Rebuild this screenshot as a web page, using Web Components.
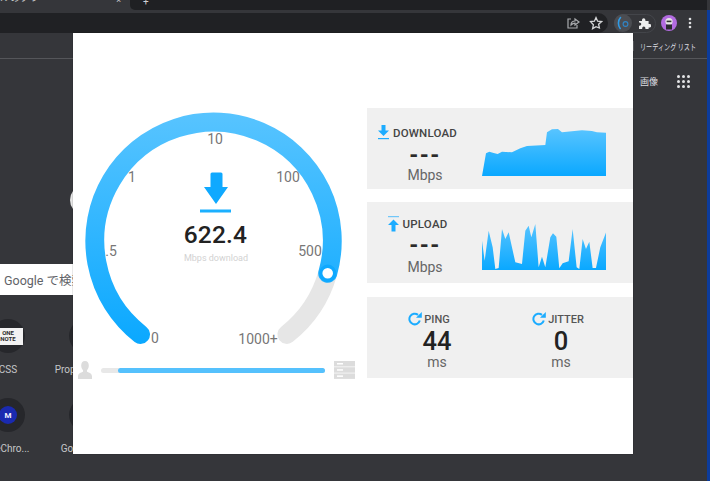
<!DOCTYPE html>
<html>
<head>
<meta charset="utf-8">
<style>
  html, body { margin: 0; padding: 0; background: #35363a; }
  body { width: 710px; height: 481px; overflow: hidden; font-family: Roboto, "Noto Sans CJK JP", sans-serif; }
</style>
</head>
<body>
<browser-window>
  <page-behind slot="page"></page-behind>
  <speed-popup slot="popup">
    <speed-gauge slot="gauge"></speed-gauge>
    <metric-panel slot="panels" label="DOWNLOAD" kind="down" pad="17" gap1="7" gap2="0"></metric-panel>
    <metric-panel slot="panels" label="UPLOAD" kind="up" pad="14" gap1="6" gap2="2"></metric-panel>
    <latency-panel slot="panels"></latency-panel>
  </speed-popup>
</browser-window>

<script>
class BrowserWindow extends HTMLElement {
    constructor() {
        super();
        this.shadowDOM = this.attachShadow({mode: "open"});
    }
    connectedCallback() {
        this.shadowDOM.innerHTML = `
        <style>
            * { box-sizing: border-box; }
            :host { display: flex; width: 710px; height: 481px; position: relative; overflow: hidden; }
            .main { flex: 1; display: flex; flex-direction: column; background: #35363a; min-width: 0; }
            .desk { width: 3px; margin-top: 10px; background: #0c3c9c; }
            .tabs { height: 13px; display: flex; flex: none; }
            .tab { width: 130px; color: #c9cacc; font-size: 10px; line-height: 1; overflow: hidden; display: flex; justify-content: space-between; padding: 0 9px 0 0; }
            .tab span { margin-top: -7px; }
            .tab b { font-weight: 400; font-size: 9px; margin-top: -4px; }
            .strip { flex: 1; height: 10px; background: #1f2023; border-radius: 0 0 0 5px; color: #cfd0d2; font-size: 10px; padding-left: 13px; line-height: 1; overflow: hidden; }
            .strip span { display: block; margin-top: -3px; }
            .tools { height: 20px; display: flex; align-items: center; flex: none; }
            .omni { width: 608px; height: 20px; background: #202124; border-radius: 0 10px 10px 0; display: flex; align-items: center; justify-content: flex-end; gap: 9px; padding-right: 5px; flex: none; }
            .ext { margin-left: 6px; width: 42px; height: 19px; border: 1px solid #43454a; border-radius: 10px; display: flex; align-items: center; gap: 6px; flex: none; }
            .ext .on { width: 18px; height: 18px; margin-left: -1px; border-radius: 50%; background: #4b4d52; display: flex; align-items: center; justify-content: center; }
            .avatar { margin-left: 5px; width: 16px; height: 16px; border-radius: 50%; background: #b26be0; display: flex; align-items: center; justify-content: center; flex: none; }
            .more { margin-left: 11px; flex: none; display: flex; }
            svg { display: block; }
            .body { flex: 1; min-height: 0; }
            ::slotted([slot=popup]) { position: absolute; left: 73px; top: 33px; }
        </style>
        <div class="main">
            <div class="tabs">
                <div class="tab"><span>ルのタブ</span><b>×</b></div>
                <div class="strip"><span>+</span></div>
            </div>
            <div class="tools">
                <div class="omni">
                    <svg width="14" height="14" viewBox="0 0 14 14" fill="none" stroke="#a9abae" stroke-width="1.2"><path d="M5 3H2v9h9V9"/><path d="M5 9c0-3 2-4 4-4V3l4 3-4 3V7.2C7 7.2 6 8 5 9z"/></svg>
                    <svg width="14" height="14" viewBox="0 0 14 14" fill="none" stroke="#d6d7d9" stroke-width="1.3"><path d="M7 1.6l1.6 3.6 3.9.4-2.9 2.6.8 3.8L7 10.6l-3.4 2 .8-3.8L1.5 5.6l3.9-.4z"/></svg>
                </div>
                <div class="ext">
                    <div class="on"><svg width="14" height="14" viewBox="0 0 14 14" fill="none"><path d="M4.5 1.5C1.8 4.5 1.8 9.5 4.2 12.5" stroke="#2f9be6" stroke-width="1.6" stroke-linecap="round"/><circle cx="9.5" cy="8" r="2.4" stroke="#2f86c8" stroke-width="1.1"/></svg></div>
                    <svg width="13" height="13" viewBox="0 0 13 13" fill="#eceded"><path d="M1 4h3V3a1.7 1.7 0 0 1 3.4 0v1h3.2v3h1a1.7 1.7 0 0 1 0 3.4h-1V12H7.4v-1a1.6 1.6 0 0 0-3.2 0v1H1V8.8h.6a1.7 1.7 0 0 0 0-3.4H1z"/></svg>
                </div>
                <div class="avatar"><svg width="12" height="13" viewBox="0 0 12 13"><circle cx="6" cy="4.5" r="3.6" fill="#e6e6e6"/><rect x="3" y="7.5" width="6" height="5" fill="#2b2b2f"/><rect x="3.6" y="3.6" width="4.8" height="1.6" fill="#333"/></svg></div>
                <div class="more"><svg width="4" height="12" viewBox="0 0 4 12" fill="#dfe0e2"><circle cx="2" cy="2" r="1.3"/><circle cx="2" cy="6" r="1.3"/><circle cx="2" cy="10" r="1.3"/></svg></div>
            </div>
            <div class="body"><slot name="page"></slot></div>
        </div>
        <div class="desk"></div>
        <slot name="popup"></slot>`;
    }
}

class PageBehind extends HTMLElement {
    constructor() {
        super();
        this.shadowDOM = this.attachShadow({mode: "open"});
    }
    connectedCallback() {
        this.shadowDOM.innerHTML = `
        <style>
            * { box-sizing: border-box; }
            :host { display: block; height: 100%; color: #c8c9cb; font-family: Roboto, "Noto Sans CJK JP", sans-serif; }
            .bookmarks { height: 26px; border-bottom: 1px solid #55565a; display: flex; justify-content: flex-end; align-items: center; padding-right: 11px; font-size: 8.5px; color: #dcdde0; font-family: "Noto Sans CJK JP", sans-serif; white-space: nowrap; }
            .bookmarks i { width: 1px; height: 10px; background: #5b5c60; margin-right: 6px; }
            .bookmarks span { display: block; width: 56px; transform: scaleX(.72); transform-origin: left center; }
            .content { display: flex; justify-content: space-between; }
            .left { width: 73px; overflow: hidden; display: flex; flex-direction: column; flex: none; }
            .logo { width: 30px; height: 30px; border-radius: 50%; background: #e6e6e6; margin: 126px 0 0 70px; flex: none; }
            .search { height: 31px; margin-top: 49px; background: #fff; color: #5f6368; font-size: 12.5px; display: flex; align-items: center; padding-left: 4px; white-space: nowrap; flex: none; font-family: Roboto, "Noto Sans CJK JP", sans-serif; }
            .row { display: flex; width: 160px; margin-top: 24px; margin-left: -24px; gap: 14px; }
            .row + .row { margin-top: 22px; }
            .cut { display: flex; flex-direction: column; align-items: center; width: 64px; flex: none; font-size: 10px; color: #c6c7c9; white-space: nowrap; }
            .dot { width: 34px; height: 34px; border-radius: 50%; background: #26272b; display: flex; align-items: center; justify-content: center; margin-bottom: 11px; flex: none; }
            .label { width: 64px; text-align: center; line-height: 12px; }
            .one { width: 30px; height: 17px; background: #f2f2f2; color: #2c2c2c; font-size: 6px; font-weight: 700; line-height: 6.5px; text-align: center; padding-top: 2px; }
            .m { width: 18px; height: 18px; border-radius: 50%; background: #1a2ab0; color: #f2f2ff; font-size: 8px; font-weight: 700; display: flex; align-items: center; justify-content: center; }
            .right { width: 77px; display: flex; align-items: flex-start; gap: 19px; padding: 16px 0 0 10px; color: #dcdde0; font-size: 9px; line-height: 13px; font-family: "Noto Sans CJK JP", sans-serif; flex: none; }
            .apps { display: grid; grid-template-columns: repeat(3, 3px); gap: 2px; }
            .apps i { width: 3px; height: 3px; background: #e4e5e6; border-radius: 50%; }
        </style>
        <div class="bookmarks"><i></i><span>リーディング リスト</span></div>
        <div class="content">
            <div class="left">
                <div class="logo"></div>
                <div class="search">Google で検索</div>
                <div class="row">
                    <div class="cut"><div class="dot"><div class="one">ONE<br>NOTE</div></div><div class="label">CSS</div></div>
                    <div class="cut"><div class="dot"></div><div class="label">PropertyEdit...</div></div>
                </div>
                <div class="row">
                    <div class="cut"><div class="dot"><div class="m">M</div></div><div class="label">MeChro...</div></div>
                    <div class="cut"><div class="dot"></div><div class="label">Google Pay</div></div>
                </div>
            </div>
            <div class="right">
                <span>画像</span>
                <div class="apps"><i></i><i></i><i></i><i></i><i></i><i></i><i></i><i></i><i></i></div>
            </div>
        </div>`;
    }
}

class SpeedPopup extends HTMLElement {
    constructor() {
        super();
        this.shadowDOM = this.attachShadow({mode: "open"});
    }
    connectedCallback() {
        this.shadowDOM.innerHTML = `
        <style>
            * { box-sizing: border-box; }
            :host { display: grid; grid-template-columns: 294px 266px; width: 560px; height: 421px; background: #fff; color: #222; font-family: Roboto, sans-serif; box-shadow: 0 0 1px rgba(0,0,0,.5); }
            .gauge { padding-top: 75px; }
            .panels { padding-top: 75px; display: flex; flex-direction: column; gap: 13px; }
        </style>
        <div class="gauge"><slot name="gauge"></slot></div>
        <div class="panels"><slot name="panels"></slot></div>`;
    }
}

class SpeedGauge extends HTMLElement {
    constructor() {
        super();
        this.shadowDOM = this.attachShadow({mode: "open"});
    }
    connectedCallback() {
        this.shadowDOM.innerHTML = `
        <style>
            :host { display: block; }
            svg { display: block; }
            text { font-family: Roboto, sans-serif; text-anchor: middle; }
            .tick { font-size: 14px; fill: #777; }
            .value { font-size: 24.5px; font-weight: 500; fill: #222; letter-spacing: .2px; }
            .unit { font-size: 9px; fill: #d2d2d2; }
            .progress { display: flex; align-items: center; gap: 9px; padding: 11px 0 0 5px; width: 282px; box-sizing: border-box; }
            .track { flex: 1; height: 5px; border-radius: 3px; background: #e8e8e8; padding-left: 17px; }
            .track i { display: block; height: 5px; border-radius: 3px; background: #55c1fd; }
        </style>
        <svg width="284" height="242" viewBox="73 108 284 242">
            <defs>
                <linearGradient id="arc" gradientUnits="userSpaceOnUse" x1="0" y1="112" x2="0" y2="345">
                    <stop offset="0" stop-color="#58c4ff"/>
                    <stop offset="1" stop-color="#0aa8ff"/>
                </linearGradient>
            </defs>
            <path d="M327.7 273.3A118.7 118.7 0 0 1 286.9 334.4" fill="none" stroke="#e6e6e6" stroke-width="19" stroke-linecap="round"/>
            <path d="M140.5 334.4A118.7 118.7 0 1 1 327.7 273.3" fill="none" stroke="url(#arc)" stroke-width="19" stroke-linecap="round"/>
            <circle cx="327.7" cy="273.3" r="7" fill="#fff" stroke="#0fa9ff" stroke-width="3.4"/>
            <text class="tick" x="215" y="144">10</text>
            <text class="tick" x="132" y="182">1</text>
            <text class="tick" x="288" y="182">100</text>
            <text class="tick" x="111" y="256">.5</text>
            <text class="tick" x="310" y="256">500</text>
            <text class="tick" x="155" y="343">0</text>
            <text class="tick" x="258" y="344">1000+</text>
            <path d="M210.5 174a1.5 1.5 0 0 1 1.5-1.5h9a1.5 1.5 0 0 1 1.500 1.500V187h5.500l-12 17-12-17h6.500z" fill="#0fa9ff"/>
            <rect x="200" y="209.500" width="31" height="3" fill="#1bb0ff"/>
            <text class="value" x="215.500" y="243">622.4</text>
            <text class="unit" x="216" y="261">Mbps download</text>
        </svg>
        <div class="progress">
            <svg width="14" height="18" viewBox="0 0 14 18" fill="#dcdcdc"><path d="M7 0c2.600 0 3.800 2 3.800 4.500 0 2-.8 3.700-1.800 4.700v1.600c2 .8 5 1.700 5 4.700v2.500H0v-2.500c0-3 3-3.900 5-4.700V9.200C4 8.200 3.200 6.500 3.200 4.500 3.200 2 4.400 0 7 0z"/></svg>
            <div class="track"><i></i></div>
            <svg width="21" height="18" viewBox="0 0 21 18"><g fill="#dcdcdc"><rect y="0" width="21" height="5.500"/><rect y="6.200" width="21" height="5.500"/><rect y="12.400" width="21" height="5.500"/></g><g fill="#fff"><rect x="3" y="2" width="6" height="1.500"/><rect x="3" y="8.200" width="6" height="1.500"/><rect x="3" y="14.400" width="6" height="1.500"/></g></svg>
        </div>`;
    }
}

const CHARTS = {
    down: "350,213 362,145 372,140 385,144 397,147 410,140 440,142 465,130 485,123 540,120 545,82 560,73 578,72 590,82 620,79 650,76 680,78 695,82 723,83 723,213",
    up: "350,218 350,130 358,190 370,100 382,150 390,215 400,212 410,95 420,125 430,105 450,195 470,200 480,100 490,85 498,120 510,80 520,210 530,178 540,210 555,120 563,108 573,118 582,213 592,198 610,192 622,95 634,210 642,215 652,125 662,155 672,133 682,212 692,212 705,150 723,103 723,218"
};

class MetricPanel extends HTMLElement {
    constructor() {
        super();
        this.shadowDOM = this.attachShadow({mode: "open"});
    }
    connectedCallback() {
        const kind = this.getAttribute("kind");
        const label = this.getAttribute("label");
        const bottom = kind === "down" ? 213 : 218;
        const icon = kind === "down"
            ? `<svg width="11" height="15" viewBox="0 0 11 15" fill="#1cacff"><path d="M3.500 0h4v5.500H11L5.500 11 0 5.500h3.500z"/><rect y="13" width="11" height="1.200"/></svg>`
            : `<svg width="11" height="16" viewBox="0 0 11 16" fill="#1cacff"><rect opacity=".6" y="0" width="11" height="1.200"/><path d="M5.500 3.500L11 9H7.500v6.500h-4V9H0z"/></svg>`;
        this.shadowDOM.innerHTML = `
        <style>
            * { box-sizing: border-box; }
            :host { display: grid; grid-template-columns: 115px 124px; height: 81px; background: #f0f0f0; font-family: Roboto, sans-serif; }
            .info { display: flex; flex-direction: column; align-items: center; padding-top: ${this.getAttribute("pad")}px; padding-left: 1px; }
            .title { display: flex; align-items: center; gap: 4px; font-size: 11.5px; font-weight: 500; color: #444; letter-spacing: .2px; height: 15px; white-space: nowrap; margin-left: -15px; }
            .title svg { flex: none; }
            .dash { font-size: 23px; font-weight: 700; line-height: 18px; letter-spacing: 1.5px; color: #2a2a2a; margin-top: ${this.getAttribute("gap1")}px; }
            .unit { font-size: 14px; color: #666; line-height: 20px; margin-top: ${this.getAttribute("gap2")}px; }
            svg { display: block; }
            .chart { align-self: end; padding-bottom: 13px; }
        </style>
        <div class="info">
            <div class="title">${icon}<span>${label}</span></div>
            <div class="dash">---</div>
            <div class="unit">Mbps</div>
        </div>
        <div class="chart">
            <svg width="124.300" height="50" viewBox="350 ${bottom - 150} 373 150" preserveAspectRatio="none">
                <defs><linearGradient id="g" x1="0" y1="0" x2="0" y2="1"><stop offset="0" stop-color="#58c4ff"/><stop offset="1" stop-color="#0aa8ff"/></linearGradient></defs>
                <polygon points="${CHARTS[kind]}" fill="url(#g)"/>
            </svg>
        </div>`;
    }
}

class LatencyPanel extends HTMLElement {
    constructor() {
        super();
        this.shadowDOM = this.attachShadow({mode: "open"});
    }
    connectedCallback() {
        const refresh = `<svg width="14" height="14" viewBox="0 0 14 14" fill="none"><path d="M11.800 8.500A5.300 5.300 0 1 1 10 2.900" stroke="#1cacff" stroke-width="2"/><path d="M8 5.800h5.800V0z" fill="#1cacff"/></svg>`;
        const cell = (name, val, shift) => `
            <div class="cell">
                <div class="title" style="margin-left:${shift}px">${refresh}<span>${name}</span></div>
                <div class="val">${val}</div>
                <div class="unit">ms</div>
            </div>`;
        this.shadowDOM.innerHTML = `
        <style>
            * { box-sizing: border-box; }
            :host { display: grid; box-sizing: border-box; grid-template-columns: 124px 124px; align-content: start; padding: 15px 0 0 8px; height: 81px; margin-top: 1px; background: #f0f0f0; font-family: Roboto, sans-serif; }
            .cell { display: flex; flex-direction: column; align-items: center; }
            .title { display: flex; align-items: center; gap: 2px; font-size: 11px; font-weight: 500; color: #555; height: 14px; }
            svg { display: block; flex: none; }
            .val { font-size: 25.5px; font-weight: 500; color: #222; line-height: 26px; margin-top: 2px; }
            .unit { font-size: 14px; color: #666; line-height: 16px; margin-top: 0; }
        </style>
        ${cell("PING", "44", -16)}
        ${cell("JITTER", "0", -6)}`;
    }
}

customElements.define("browser-window", BrowserWindow);
customElements.define("page-behind", PageBehind);
customElements.define("speed-popup", SpeedPopup);
customElements.define("speed-gauge", SpeedGauge);
customElements.define("metric-panel", MetricPanel);
customElements.define("latency-panel", LatencyPanel);
</script>
</body>
</html>
